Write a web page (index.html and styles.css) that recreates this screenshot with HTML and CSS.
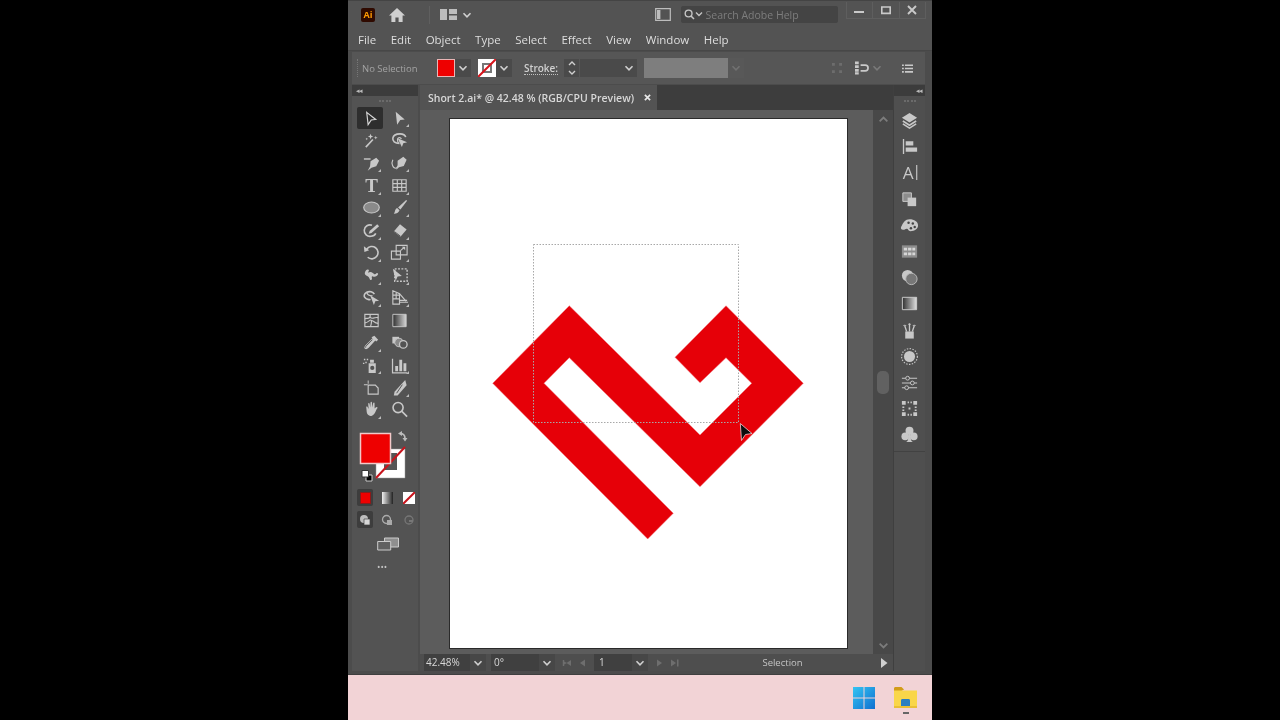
FILE: index.html
```html
<!DOCTYPE html>
<html lang="en">
  <head>
    <meta charset="UTF-8" />
    <title>Short 2.ai - Illustrator</title>
    <link rel="stylesheet" href="styles.css">
  </head>
  <body>
    <svg class="defs" width="0" height="0">
      <symbol id="chev" viewBox="0 0 10 10"><path d="M1.5 3.2 5 6.8 8.5 3.2" fill="none" stroke="currentColor" stroke-width="1.6"/></symbol>
      <symbol id="back" viewBox="0 0 10 10"><path d="M1 3 5 5 1 7ZM5 5" fill="currentColor"/><path d="M9 2 4.5 5 9 8Z" fill="currentColor"/><path d="M1.5 2v6" stroke="currentColor" stroke-width="1.5"/></symbol>
    </svg>
    <div class="app">
      <div class="titlebar">
        <span class="ai-logo">Ai</span>
        <svg class="home" viewBox="0 0 16 14"><path d="M8 0 0 7.4h2.4V14h4V9.4h3.2V14h4V7.4H16Z" fill="currentColor"/></svg>
        <span class="vline"></span>
        <svg class="workspace" viewBox="0 0 17 11"><path d="M0 0h7v11H0ZM9 0h8v5H9ZM9 6.4h8V11H9Z" fill="currentColor"/></svg>
        <svg class="chev"><use href="#chev"/></svg>
        <span class="spacer"></span>
        <svg class="panelbtn" viewBox="0 0 16 13"><path d="M.7.7h14.6v11.6H.7Z" fill="none" stroke="currentColor" stroke-width="1.2"/><path d="M2 2h3.4v9H2Z" fill="currentColor"/></svg>
        <div class="search">
          <svg class="lens" viewBox="0 0 20 11"><circle cx="4.6" cy="4.5" r="3.4" fill="none" stroke="currentColor" stroke-width="1.4"/><path d="M7 7l3 3" stroke="currentColor" stroke-width="1.6"/><path d="M12 3.5l3 3 3-3" fill="none" stroke="currentColor" stroke-width="1.4"/></svg>
          <span>Search Adobe Help</span>
        </div>
        <div class="winbtns">
          <span class="winbtn"><svg viewBox="0 0 10 10"><path d="M0 7h10" stroke="currentColor" stroke-width="2"/></svg></span>
          <span class="winbtn"><svg viewBox="0 0 10 10"><path d="M.8 2h8.4v6.4H.8Z" fill="none" stroke="currentColor" stroke-width="1.6"/></svg></span>
          <span class="winbtn"><svg viewBox="0 0 10 10"><path d="M1 1l8 8M9 1l-8 8" stroke="currentColor" stroke-width="1.9"/></svg></span>
        </div>
      </div>

      <div class="menubar">
        <span>File</span><span>Edit</span><span>Object</span><span>Type</span><span>Select</span><span>Effect</span><span>View</span><span>Window</span><span>Help</span>
      </div>

      <div class="controlbar">
        <span class="grip"></span>
        <span class="no-sel">No Selection</span>
        <span class="swatch red"></span>
        <span class="chevbox"><svg class="chev"><use href="#chev"/></svg></span>
        <svg class="swatch stroke-none" viewBox="0 0 18 18"><path d="M0 0h18v18H0Z" fill="#fff"/><path d="M5 5h8v8H5Z" fill="none" stroke="#777" stroke-width="2"/><path d="M0 18 18 0" stroke="#d8141c" stroke-width="2"/></svg>
        <span class="chevbox"><svg class="chev"><use href="#chev"/></svg></span>
        <span class="stroke-label">Stroke:</span>
        <span class="spinner"><svg viewBox="0 0 10 18"><path d="M2 6l3-3 3 3M2 12l3 3 3-3" fill="none" stroke="currentColor" stroke-width="1.4"/></svg></span>
        <span class="strokefield"></span>
        <span class="chevbox"><svg class="chev"><use href="#chev"/></svg></span>
        <span class="stylefield"></span>
        <span class="chevbox dim"><svg class="chev"><use href="#chev"/></svg></span>
        <span class="spacer"></span>
        <svg class="bar-ic dimmed" viewBox="0 0 12 12"><path d="M0 0h3.4v3.4H0ZM8.6 0H12v3.4H8.6ZM0 8.6h3.4V12H0ZM8.6 8.6H12V12H8.6Z" fill="currentColor"/></svg>
        <svg class="bar-ic magnet" viewBox="0 0 15 14"><path d="M0 0h4v3H0ZM0 4h4v3H0ZM0 8h4v3H0ZM0 11.500h4V14H0Z" fill="currentColor"/><path d="M6 4h5a2.700 2.700 0 0 1 0 6H6" fill="none" stroke="currentColor" stroke-width="1.800"/></svg>
        <svg class="chev dimmed"><use href="#chev"/></svg>
        <svg class="bar-ic listic" viewBox="0 0 12 9"><path d="M0 0h2v1.800H0ZM0 3.600h2v1.800H0ZM0 7.200h2V9H0ZM3.200 0H12v1.800H3.200ZM3.200 3.600H12v1.800H3.200ZM3.200 7.200H12V9H3.200Z" fill="currentColor"/></svg>
      </div>

      <div class="workspace-row">
        <aside class="tools">
          <div class="panel-head"><span>◂◂</span></div>
          <div class="panel-grip"></div>
          <div class="toolgrid">
            <span class="tool active"><svg viewBox="0 0 20 20"><path class="s" d="M6 3.500 15.500 11 10.800 11.500 7.500 16.500Z"/></svg></span>
            <span class="tool more"><svg viewBox="0 0 20 20"><path d="M6 3 15.500 11 10.800 11.500 7.500 16.500Z"/></svg></span>
            <span class="tool"><svg viewBox="0 0 20 20"><path class="s w2" d="M4 17l7.500-8"/><path d="M9 3l.8 2 2 .8-2 .8L9 8.600l-.8-2-2-.8 2-.8ZM14.500 5l.5 1.500 1.500.5-1.500.5-.5 1.500-.5-1.500L12.500 7l1.500-.5ZM5 7l.4 1 1 .4-1 .4-.4 1-.4-1-1-.4 1-.4Z"/></svg></span>
            <span class="tool"><svg viewBox="0 0 20 20"><path class="s w2" d="M10 13C5 13 2.500 10.500 3 7.500 3.500 4.500 7 3 10.500 3c3.500 0 5.500 1.500 6 3.500"/><path class="s" d="M9 13c-1-2-2-4-.5-5.500 1.500-1.200 3 0 3.500 1"/><path d="M8 7.500l10 4.300-4 1-1.500 4Z"/></svg></span>
            <span class="tool more"><svg viewBox="0 0 20 20"><path d="M2 4.500h7v1.500H2Z"/><path d="M9 7.500l6-3.500 3 3-3 6-5 1.500-4 3 2.500-4.500Z"/></svg></span>
            <span class="tool more"><svg viewBox="0 0 20 20"><path class="s" d="M3 6c-2 4 0 9 3 9 1.500 0 1.500-2 3-3"/><path d="M8 7l6-4 3.500 3-3 6.500-5 1.500-3 2.500 1.500-4Z"/></svg></span>
            <span class="tool more"><svg viewBox="0 0 20 20"><text x="10" y="16.500" class="tool-t">T</text></svg></span>
            <span class="tool more"><svg viewBox="0 0 20 20"><path class="s" d="M3 4h14v12H3ZM3 8h14M3 12h14M7.700 4v12M12.300 4v12"/></svg></span>
            <span class="tool more"><svg viewBox="0 0 20 20"><ellipse cx="10" cy="10" rx="8.200" ry="5.800" fill="#8a8a8a" stroke="#c8c8c8" stroke-width="1.200"/></svg></span>
            <span class="tool more"><svg viewBox="0 0 20 20"><path d="M17 2l1 1-7 9-2.500-2Z"/><path d="M7.500 10.500l2.500 2.300c-.5 2-2.500 3.500-6 3.700 1.500-1.500.8-4.500 3.500-6Z"/></svg></span>
            <span class="tool more"><svg viewBox="0 0 20 20"><path class="s w2" d="M10.500 4.500a6 6 0 1 0-1 11.500c3 0 4.500-2 5-3"/><path d="M8 10.500l8-7 2 2-8 7-3 1Z" /></svg></span>
            <span class="tool more"><svg viewBox="0 0 20 20"><path d="M10.500 3.500l7 5.500-6.500 7.500-7-5.500Z"/><path d="M4.500 11l6.500 5" stroke="#535353" stroke-width="1"/></svg></span>
            <span class="tool more"><svg viewBox="0 0 20 20"><path class="s w2" d="M5 6.500A6.500 6.500 0 1 1 6 15"/><path d="M2 3.500l.5 6 5-2Z"/></svg></span>
            <span class="tool more"><svg viewBox="0 0 20 20"><path class="s" d="M6.500 2.500H18v10H6.500ZM1.500 8.500H11V17H1.500Z"/><path class="s" d="M11 8l4-3.500"/><path d="M12.500 4H16v3.500Z"/></svg></span>
            <span class="tool more"><svg viewBox="0 0 20 20"><path d="M3 7c1-3 2.500-4 4-3 1 .8-.5 2-.5 3 1-.5 3-1.500 4.500 0 1.500 1.200 2.500 2.500 4 1 1-1 1.500-.5 2 .5-1 2.500-3.500 3.500-5.500 2.500-1-.5-1.500 0-1 2.500.3 1-1 1.500-2 1-1-2-1-3-3-4-1.500-.8-3-2-2.500-3.500Z"/></svg></span>
            <span class="tool more"><svg viewBox="0 0 20 20"><path class="s dash" d="M5 3h13v13H5Z"/><path d="M3 3l9.500 7.500-4.500.5-2 4.500Z"/></svg></span>
            <span class="tool more"><svg viewBox="0 0 20 20"><path class="s w2" d="M13 6.500C11.500 4 8 3 5 4.500 2 6 1.500 9 3.500 10.500 5 12 8 12.500 9 12"/><path class="s" d="M5 5c1 2.500 3 3.500 6 3"/><path d="M8.500 7.500l9.500 6-4 .5-1.500 4Z"/></svg></span>
            <span class="tool more"><svg viewBox="0 0 20 20"><path class="s" d="M3 3l7 3v5.500H3ZM10 6l7 8M3 7.500h7M3 3v14h7V11.500M6.500 4.500V11.500"/><path class="s" d="M10 13h8M10 15h9"/></svg></span>
            <span class="tool"><svg viewBox="0 0 20 20"><path class="s" d="M3 3.500h14v13H3Z"/><path class="s" d="M3 8c3-1 5 1 5.500-2 .3-1.500 0-2 0-2.500M8.500 6c2 4 3 0 8.500 1M3 12.500c3 0 5-3 6-3 1.500 0 1 3.500 0 7M10 10c2 0 3 3 7 3"/></svg></span>
            <span class="tool"><svg viewBox="0 0 20 20"><defs><linearGradient id="gr1"><stop offset="0" stop-color="#2f2f2f"/><stop offset="1" stop-color="#d6d6d6"/></linearGradient></defs><path d="M3 3.500h14v13H3Z" fill="url(#gr1)" stroke="#c8c8c8"/></svg></span>
            <span class="tool more"><svg viewBox="0 0 20 20"><path d="M13 3l4 4-2 2-1-1-7 7.500c-1.500 1.500-3 2-4 1s-.5-2.500 1-4l7-7-1-1Z" /><path d="M11 7l-6.500 6.500c-.8.8-1 1.500-.5 2" stroke="#535353" stroke-width="1" fill="none"/></svg></span>
            <span class="tool"><svg viewBox="0 0 20 20"><path d="M2.500 4h7v7h-7Z"/><circle cx="9.500" cy="10" r="4.500" fill="#8a8a8a" stroke="#c8c8c8"/><circle cx="14" cy="12" r="4" fill="#535353" stroke="#c8c8c8" stroke-width="1.400"/></svg></span>
            <span class="tool more"><svg viewBox="0 0 20 20"><path d="M8.500 4h4v3h-4ZM7 7.500h7.500V18H7Z"/><circle cx="10.800" cy="12.500" r="2.200" fill="#535353"/><path d="M2 3h1.500v1.500H2ZM5 3h1.500v1.500H5ZM3.500 6H5v1.500H3.500ZM1 7h1.500v1.500H1Z"/></svg></span>
            <span class="tool more"><svg viewBox="0 0 20 20"><path d="M2 3h1.300v14H18v1.300H2Z"/><path d="M5.500 10.500h3V16h-3ZM9.800 4h3v12h-3ZM14.200 7.500h3V16h-3Z"/></svg></span>
            <span class="tool"><svg viewBox="0 0 20 20"><path d="M2 6.500h4v1H2ZM6 2.500h1V6H6Z"/><path class="s" d="M6.500 7.500H14l3 3v6.500H6.500Z"/></svg></span>
            <span class="tool more"><svg viewBox="0 0 20 20"><path d="M16 2l1.500 5.500-9.500 11-4 0 .8-4Z"/><path d="M13 7l-6 9" stroke="#535353" stroke-width="1"/></svg></span>
            <span class="tool more"><svg viewBox="0 0 20 20"><path d="M4.500 8c-.5-1 .8-1.500 1.500-.5l1 2L6.500 4c0-1 1.300-1 1.500 0l.7 4L9 2.500c0-1 1.500-1 1.500 0l.3 5.500 1-4.800c.3-1 1.500-.8 1.400.2L13.300 9c.8-1 1.800-2 2.700-1.500.7.400.2 1-.3 1.700-1.200 1.800-1.700 5.800-5.200 7.300-3 1-5-1-5.500-3.500Z"/></svg></span>
            <span class="tool"><svg viewBox="0 0 20 20"><circle cx="8.500" cy="8" r="5.300" class="s w2"/><path class="s w2" d="M12.500 12l5.500 5.500"/></svg></span>
          </div>

          <svg class="fillstroke" viewBox="0 0 52 56">
            <path d="M20 20h29v29H20Z" fill="#fff" stroke="#999" stroke-width=".5"/>
            <path d="M28 24h13v17H28Z" fill="#555"/>
            <path d="M20 49 49 18" stroke="#c8141c" stroke-width="2"/>
            <path d="M4.500 4.500h30v30h-30Z" fill="#ee0000" stroke="#f2c9c9" stroke-width="1.500"/>
            <path class="swap" d="M44 4.500c3 0 5 2 5 5" />
            <path d="M42 4.500l4-2.500v5ZM49 12.500l-2.500-3.500h5Z" fill="#bbb"/>
            <path d="M10 46h6v6h-6Z" fill="#000" stroke="#ccc"/>
            <path d="M6 41.500h6.500V48H6Z" fill="#fff" stroke="#333"/>
          </svg>

          <div class="colormodes">
            <span class="mode active"><i class="m-red"></i></span>
            <span class="mode"><i class="m-grad"></i></span>
            <span class="mode"><svg viewBox="0 0 12 12"><path d="M0 0h12v12H0Z" fill="#fff"/><path d="M0 12 12 0" stroke="#c8141c" stroke-width="2"/></svg></span>
          </div>
          <div class="colormodes drawmodes">
            <span class="mode active"><svg viewBox="0 0 12 12"><circle cx="5" cy="5" r="4" fill="#bdbdbd"/><path d="M5 5h6v6H5Z" fill="#d8d8d8" stroke="#444" stroke-width=".7"/></svg></span>
            <span class="mode"><svg viewBox="0 0 12 12"><circle cx="5.500" cy="5.500" r="4" fill="none" stroke="#aaa" stroke-width="1.300"/><path d="M6 6h5v5H6Z" fill="#aaa"/></svg></span>
            <span class="mode faint"><svg viewBox="0 0 12 12"><circle cx="6" cy="6" r="4" fill="none" stroke="#777" stroke-width="1.300"/><path d="M6 6h4v2H6Z" fill="#777"/></svg></span>
          </div>
          <svg class="screenmode" viewBox="0 0 22 14"><path d="M7.500 1h14v9h-14Z" fill="#8f8f8f" stroke="#ccc"/><path d="M.7 4.500h13V13H.7Z" fill="#616161" stroke="#ccc"/></svg>
          <div class="dots">•••</div>
        </aside>

        <div class="docarea">
          <div class="tabrow">
            <div class="doctab">
              <span>Short 2.ai* @ 42.48 % (RGB/CPU Preview)</span>
              <svg class="tabclose" viewBox="0 0 8 8"><path d="M1 1l6 6M7 1 1 7" stroke="currentColor" stroke-width="1.900"/></svg>
            </div>
          </div>
          <div class="canvasrow">
            <div class="canvas">
              <div class="artboard">
                <svg class="art" viewBox="450 119 397 530">
                  <path fill="#e60008" stroke="#f07d85" stroke-width=".5" d="M569.300 305.700 700 435 751.700 383.300 726 357.700 700 382.700 675 357.300 726 305.700 803.300 383.300 700 486.700 569.300 357.700 544 383.300 673.300 513.300 647.700 539 492.700 383.300Z"/>
                  <rect class="selbox" x="533.500" y="244.500" width="205" height="178"/>
                  <path d="M740.300 423.500 752 433.500 745.500 434.500 741.500 440.500Z" fill="#0c0c0c" stroke="#f0d0d4" stroke-width=".8"/>
                </svg>
              </div>
            </div>
            <div class="scrollbar">
              <svg class="sc-ch up"><use href="#chev"/></svg>
              <span class="thumb"></span>
              <svg class="sc-ch"><use href="#chev"/></svg>
            </div>
          </div>
          <div class="statusbar">
            <span class="field zoomf">42.48%</span>
            <span class="chevbox sb"><svg class="chev"><use href="#chev"/></svg></span>
            <span class="field rotf">0°</span>
            <span class="chevbox sb"><svg class="chev"><use href="#chev"/></svg></span>
            <span class="navs"><svg viewBox="0 0 10 10"><use href="#back"/></svg><svg viewBox="0 0 10 10"><path d="M8 1.500 3 5l5 3.500Z" fill="currentColor"/></svg></span>
            <span class="field pagef">1</span>
            <span class="chevbox sb"><svg class="chev"><use href="#chev"/></svg></span>
            <span class="navs"><svg viewBox="0 0 10 10"><path d="M2 1.500 7 5l-5 3.500Z" fill="currentColor"/></svg><svg viewBox="0 0 10 10"><path d="M1 1.500 6 5 1 8.500ZM7 1.500h1.500v7H7Z" fill="currentColor"/></svg></span>
            <span class="status-label">Selection</span>
            <svg class="playic" viewBox="0 0 8 10"><path d="M1 0l6.500 5L1 10Z" fill="currentColor"/></svg>
          </div>
        </div>

        <aside class="panels">
          <div class="panel-head right"><span>◂◂</span></div>
          <div class="panel-grip"></div>
          <div class="dock">
            <svg viewBox="0 0 20 20"><path d="M10 2l8 5-8 5-8-5Z"/><path class="s w2" d="M3 10.500l7 4.500 7-4.500M3 13.500l7 4.500 7-4.500"/></svg>
            <svg viewBox="0 0 20 20"><path d="M3 2h1.400v16H3ZM6 4.500h8v4.500H6ZM6 11h12v4.500H6Z"/></svg>
            <svg viewBox="0 0 20 20"><text x="8.500" y="16.500" class="dock-a">A</text><path d="M17 2h1.200v16H17Z"/></svg>
            <svg viewBox="0 0 20 20"><path d="M3 3h9v9H3Z" fill="#8c8c8c" stroke="#ccc"/><path d="M8 8h9v9H8Z"/></svg>
            <svg viewBox="0 0 20 20"><path d="M10 3.500c5 0 9 2.500 9 6.500 0 3.500-3.500 6-8 6-2.500 0-2-2-3.500-2.500-1.700-.5-2.500 1.500-4.500 1C.5 14 .5 12 2 10c1.500-3 3.500-6.500 8-6.500Z"/><circle cx="9" cy="7" r="1.300" fill="#444"/><circle cx="13.500" cy="8" r="1.300" fill="#444"/><circle cx="15.500" cy="11.500" r="1.300" fill="#444"/><circle cx="11.500" cy="13" r="1.300" fill="#444"/></svg>
            <svg viewBox="0 0 20 20"><path d="M2 3.500h16v13H2Z" fill="#8d8d8d"/><path d="M4 6h3.500v3H4ZM8.500 6H12v3H8.500ZM13 6h3v3h-3ZM4 11h3.500v3H4ZM8.500 11H12v3H8.500ZM13 11h3v3h-3Z" fill="#d6d6d6"/></svg>
            <svg viewBox="0 0 20 20"><circle cx="8" cy="8" r="6"/><circle cx="12" cy="11.500" r="6" fill="#777" stroke="#bbb"/></svg>
            <svg viewBox="0 0 20 20"><path d="M2.500 3.500h15v13h-15Z" fill="url(#gr2)" stroke="#ccc"/><defs><linearGradient id="gr2"><stop offset="0" stop-color="#2f2f2f"/><stop offset="1" stop-color="#e0e0e0"/></linearGradient></defs></svg>
            <svg viewBox="0 0 20 20"><path d="M5.500 11h9v7.500h-9Z"/><path d="M7 11 5 5M10 11V2.500M13 11l2-6" stroke="#c8c8c8" stroke-width="1.400"/><path d="M3 5c1-1.500 3-1.500 4 0ZM8.500 4c.5-2 2.500-2 3 0ZM13 5c1-1.500 3-1.500 4 0Z"/></svg>
            <svg viewBox="0 0 20 20"><circle cx="10" cy="10" r="5.800"/><circle class="s dash2" cx="10" cy="10" r="8.300"/></svg>
            <svg viewBox="0 0 20 20"><path class="s" d="M2 5.500h16M2 10.500h16M2 15.500h16"/><circle cx="8" cy="5.500" r="2" fill="#4f4f4f" stroke="#c8c8c8"/><circle cx="13" cy="10.500" r="2" fill="#4f4f4f" stroke="#c8c8c8"/><circle cx="7" cy="15.500" r="2" fill="#4f4f4f" stroke="#c8c8c8"/></svg>
            <svg viewBox="0 0 20 20"><path d="M2 2h4v4H2ZM14 2h4v4h-4ZM2 14h4v4H2ZM14 14h4v4h-4ZM8 2.500h1.500v2H8ZM11 2.500h1.500v2H11ZM8 15.500h1.500v2H8ZM11 15.500h1.500v2H11ZM2.500 8h2v1.500h-2ZM2.500 11h2v1.500h-2ZM15.500 8h2v1.500h-2ZM15.500 11h2v1.500h-2ZM9 9h2v2H9Z"/></svg>
            <svg viewBox="0 0 20 20"><circle cx="10" cy="6" r="4.200"/><circle cx="5.500" cy="12" r="4"/><circle cx="14.500" cy="12" r="4"/><path d="M9 9h2l.5 6c.2 1.500 1 2.500 2.500 3H6c1.500-.5 2.300-1.500 2.500-3Z"/></svg>
          </div>
        </aside>
      </div>

      <div class="taskbar">
        <svg class="winlogo" viewBox="0 0 22 22"><defs><linearGradient id="wl" x1="0" y1="0" x2="1" y2="1"><stop offset="0" stop-color="#35c4f2"/><stop offset="1" stop-color="#0f6fd0"/></linearGradient></defs><path d="M0 0h10.500v10.500H0ZM11.500 0H22v10.500H11.500ZM0 11.500h10.500V22H0ZM11.500 11.500H22V22H11.500Z" fill="url(#wl)"/></svg>
        <div class="folderwrap">
          <svg class="folder" viewBox="0 0 23 21"><path d="M0 1.500C0 .6.600 0 1.500 0h6L10 2.500 7.500 4H0Z" fill="#d29c18"/><path d="M0 3.500h23V21H0Z" fill="#f9d649"/><path d="M7 13.500c0-1 .6-1.500 1.500-1.500h6c.9 0 1.500.5 1.500 1.500V19H7Z" fill="#2b7fc0"/><path d="M0 19h23v2H0Z" fill="#eabf35"/></svg>
          <span class="activebar"></span>
        </div>
      </div>
    </div>
  </body>
</html>
```

FILE: styles.css
```css
* {
  box-sizing: border-box;
}
body {
  margin: 0;
  background-color: #000;
  font-family: "Open Sans", "Noto Sans", Arial, sans-serif;
  height: 720px;
  overflow: hidden;
  display: flex;
  justify-content: center;
}
.defs {
  position: absolute;
}
.app {
  width: 584px;
  height: 720px;
  display: flex;
  flex-direction: column;
  background-color: #4c4c4c;
  color: #d8d8d8;
  filter: blur(0.4px);
}
.spacer {
  flex: 1;
}
.chev {
  width: 10px;
  height: 10px;
  color: #cfcfcf;
  flex: none;
}

/* title bar */
.titlebar {
  height: 28px;
  display: flex;
  align-items: center;
  background-color: #535353;
  padding-left: 13px;
  border-top: 1px solid #444;
  flex: none;
}
.ai-logo {
  width: 14px;
  height: 14px;
  background-color: #2f0a00;
  color: #ff9a00;
  font-size: 9px;
  font-weight: 700;
  line-height: 14px;
  text-align: center;
  border-radius: 2px;
}
.home {
  width: 16px;
  height: 14px;
  margin-left: 14px;
  color: #cfcfcf;
}
.vline {
  width: 1px;
  height: 18px;
  background-color: #5f5f5f;
  margin-left: 24px;
}
.workspace {
  width: 17px;
  height: 11px;
  margin-left: 10px;
  color: #bdbdbd;
}
.titlebar .chev {
  margin-left: 5px;
}
.panelbtn {
  width: 16px;
  height: 13px;
  color: #bdbdbd;
}
.search {
  width: 157px;
  height: 17px;
  margin-left: 10px;
  background-color: #444;
  border-radius: 2px;
  display: flex;
  align-items: center;
  padding-left: 3px;
  font-size: 10.5px;
  color: #7d7d7d;
}
.lens {
  width: 20px;
  height: 11px;
  color: #c4c4c4;
  margin-right: 2px;
}
.winbtns {
  display: flex;
  margin: -9px 6px 0 8px;
  border-left: 1px solid #5e5e5e;
}
.winbtn {
  width: 26.5px;
  height: 17px;
  display: flex;
  align-items: center;
  justify-content: center;
  border-right: 1px solid #5e5e5e;
  border-bottom: 1px solid #5e5e5e;
  color: #c9c9c9;
}
.winbtn svg {
  width: 10px;
  height: 10px;
}

/* menu */
.menubar {
  height: 23px;
  display: flex;
  gap: 14.500px;
  align-items: center;
  padding-left: 10px;
  background-color: #535353;
  font-size: 11.500px;
  color: #dedede;
  border-bottom: 1px solid #474747;
  flex: none;
}

/* control bar */
.controlbar {
  height: 32px;
  margin: 1px 7px 1px 4px;
  background-color: #565656;
  display: flex;
  align-items: center;
  padding-left: 5px;
  flex: none;
}
.grip {
  width: 2px;
  height: 18px;
  border-left: 1px dotted #777;
}
.no-sel {
  width: 75px;
  margin-left: 3px;
  font-size: 9.500px;
  color: #a3a3a3;
}
.swatch {
  width: 18px;
  height: 18px;
  flex: none;
}
.swatch.red {
  background-color: #ee0000;
  border: 1px solid #e9b5b5;
}
.chevbox {
  width: 16px;
  height: 18px;
  background-color: #4a4a4a;
  display: flex;
  align-items: center;
  justify-content: center;
  flex: none;
}
.stroke-none {
  margin-left: 7px;
}
.stroke-label {
  margin-left: 12px;
  font-size: 10px;
  font-weight: 600;
  color: #d0d0d0;
  border-bottom: 1px dotted #c0c0c0;
  line-height: 12px;
}
.spinner {
  width: 15px;
  height: 18px;
  margin-left: 6px;
  color: #cfcfcf;
  background-color: #4a4a4a;
}
.spinner svg {
  width: 10px;
  height: 18px;
  margin-left: 3px;
  display: block;
}
.strokefield {
  width: 41px;
  height: 18px;
  margin-left: 1px;
  background-color: #4a4a4a;
}
.stylefield {
  width: 84px;
  height: 20px;
  margin-left: 7px;
  background-color: #7e7e7e;
}
.chevbox.dim {
  background-color: #585858;
  height: 20px;
}
.chevbox.dim .chev {
  color: #717171;
}
.bar-ic {
  color: #c9c9c9;
  flex: none;
}
.bar-ic.dimmed {
  width: 10px;
  height: 10px;
  color: #6d6d6d;
}
.bar-ic.magnet {
  width: 14px;
  height: 14px;
  margin-left: 13px;
}
.chev.dimmed {
  color: #7a7a7a;
  margin-left: 3px;
}
.bar-ic.listic {
  width: 11px;
  height: 9px;
  margin: 0 12px 0 20px;
}

/* main row */
.workspace-row {
  flex: 1;
  display: flex;
  padding: 0 7px 3px 4px;
  min-height: 0;
  border-bottom: 1px solid #3f3f3f;
}
.tools {
  width: 66px;
  background-color: #535353;
  flex: none;
  margin-right: 2px;
}
.panel-head {
  height: 11px;
  background-color: #3c3c3c;
  color: #bbb;
  font-size: 7px;
  line-height: 11px;
  padding-left: 4px;
  letter-spacing: -1px;
}
.panel-head.right {
  text-align: right;
  padding: 0 3px 0 0;
}
.panel-grip {
  height: 3px;
  margin: 4px auto 0;
  width: 12px;
  border-top: 2px dotted #6b6b6b;
}
.toolgrid {
  display: grid;
  grid-template-columns: 28px 28px;
  grid-auto-rows: 22.450px;
  margin: 4px 0 0 5px;
}
.tool {
  position: relative;
  display: flex;
  align-items: center;
  justify-content: center;
  color: #c8c8c8;
}
.tool.active {
  background-color: #2e2e2e;
  width: 26px;
  border-radius: 2px;
}
.tool.active .s {
  stroke: #d8d8d8;
}
.tool svg {
  width: 19px;
  height: 19px;
  fill: currentColor;
}
.tool.more::after {
  content: "";
  position: absolute;
  right: 4px;
  bottom: 2px;
  border-left: 3px solid transparent;
  border-bottom: 3px solid #bbb;
}
.s {
  fill: none;
  stroke: currentColor;
  stroke-width: 1.200;
}
.s.w2 {
  stroke-width: 1.700;
}
.s.dash {
  stroke-dasharray: 2 1.500;
  stroke-width: 1.500;
}
.s.dash2 {
  stroke-dasharray: 1.500 1.500;
}
.tool-t {
  font-family: "Liberation Serif", serif;
  font-size: 20px;
  font-weight: 700;
  text-anchor: middle;
}
.dock-a {
  font-family: "Open Sans", sans-serif;
  font-size: 18px;
  text-anchor: middle;
}
.fillstroke {
  display: block;
  width: 52px;
  height: 56px;
  margin: 8px 0 0 4px;
}
.swap {
  fill: none;
  stroke: #bbb;
  stroke-width: 1.700;
}
.colormodes {
  display: flex;
  margin: 4px 0 0 5px;
  gap: 6px;
}
.mode {
  width: 16px;
  height: 17px;
  display: flex;
  align-items: center;
  justify-content: center;
  border-radius: 2px;
}
.mode.active {
  background-color: #3d3d3d;
}
.mode i {
  display: block;
  width: 11px;
  height: 12px;
}
.mode svg {
  width: 12px;
  height: 12px;
}
.m-red {
  background-color: #ee0000;
  border: 1px solid #8a1a1a;
}
.m-grad {
  background-image: linear-gradient(90deg, #f0f0f0, #222);
}
.drawmodes {
  margin-top: 5px;
}
.screenmode {
  display: block;
  width: 22px;
  height: 14px;
  margin: 9px 0 0 25px;
}
.dots {
  margin: 10px 0 0 25px;
  font-size: 9px;
  color: #c4c4c4;
  letter-spacing: 0;
  line-height: 12px;
}

/* document */
.docarea {
  flex: 1;
  display: flex;
  flex-direction: column;
  min-width: 0;
}
.tabrow {
  height: 25px;
  margin-top: 0;
  background-color: #3d3d3d;
  display: flex;
  flex: none;
}
.doctab {
  width: 237px;
  background-color: #535353;
  display: flex;
  align-items: center;
  justify-content: space-between;
  padding: 0 6px 0 8px;
  font-size: 10.500px;
  font-weight: 600;
  color: #d8d8d8;
}
.tabclose {
  width: 7px;
  height: 7px;
  color: #e8e8e8;
}
.canvasrow {
  flex: 1;
  display: flex;
  min-height: 0;
}
.canvas {
  flex: 1;
  background-color: #5c5c5c;
  padding: 9px 26px 6px 30px;
  display: flex;
}
.artboard {
  flex: 1;
  background-color: #fff;
  box-shadow: 0 0 0 1px #2a2a2a;
  position: relative;
}
.art {
  position: absolute;
  top: 0;
  left: 0;
  width: 397px;
  height: 530px;
}
.selbox {
  fill: none;
  stroke: #a8a8a8;
  stroke-width: 1;
  stroke-dasharray: 1.500 1.500;
}
.scrollbar {
  width: 20px;
  margin-left: 0;
  background-color: #484848;
  display: flex;
  flex-direction: column;
  align-items: center;
  justify-content: space-between;
  padding: 4px 0 3px;
  flex: none;
}
.sc-ch {
  width: 11px;
  height: 11px;
  color: #7c7c7c;
}
.sc-ch.up {
  transform: rotate(180deg);
}
.thumb {
  width: 12px;
  height: 23px;
  border-radius: 5px;
  background-color: #616161;
}
.statusbar {
  height: 17px;
  display: flex;
  align-items: center;
  background-color: #4e4e4e;
  padding-left: 4px;
  font-size: 10px;
  flex: none;
}
.field {
  height: 17px;
  background-color: #404040;
  line-height: 17px;
  padding-left: 2px;
}
.zoomf {
  width: 46px;
}
.rotf {
  width: 48px;
  margin-left: 5px;
  padding-left: 3px;
}
.pagef {
  width: 38px;
  padding-left: 5px;
}
.chevbox.sb {
  height: 17px;
  background-color: #474747;
}
.navs {
  width: 39px;
  display: flex;
  gap: 5px;
  justify-content: center;
  color: #6e6e6e;
  flex: none;
}
.navs svg {
  width: 10px;
  height: 10px;
}
.status-label {
  flex: 1;
  text-align: center;
  color: #c4c4c4;
  font-size: 9.500px;
  margin-right: 2px;
}
.playic {
  width: 8px;
  height: 10px;
  margin-right: 5px;
  color: #d0d0d0;
}

/* right dock */
.panels {
  width: 32px;
  flex: none;
  background-color: #4f4f4f;
  border-left: 1px solid #3f3f3f;
}
.dock {
  display: flex;
  flex-direction: column;
  align-items: center;
  gap: 7.200px;
  padding: 8px 0 7px;
  margin-top: 0;
  border-bottom: 1px solid #424242;
  color: #c8c8c8;
}
.dock svg {
  width: 19px;
  height: 19px;
  fill: currentColor;
}

/* pink band with taskbar icons */
.taskbar {
  height: 45px;
  background-color: #f2d3d6;
  display: flex;
  align-items: flex-start;
  padding: 12px 15px 0 0;
  justify-content: flex-end;
  gap: 19px;
  flex: none;
}
.winlogo {
  width: 22px;
  height: 22px;
}
.folderwrap {
  width: 23px;
  display: flex;
  flex-direction: column;
  align-items: center;
}
.folder {
  width: 23px;
  height: 21px;
}
.activebar {
  width: 6px;
  height: 2px;
  margin-top: 4px;
  background-color: #666;
}
```
